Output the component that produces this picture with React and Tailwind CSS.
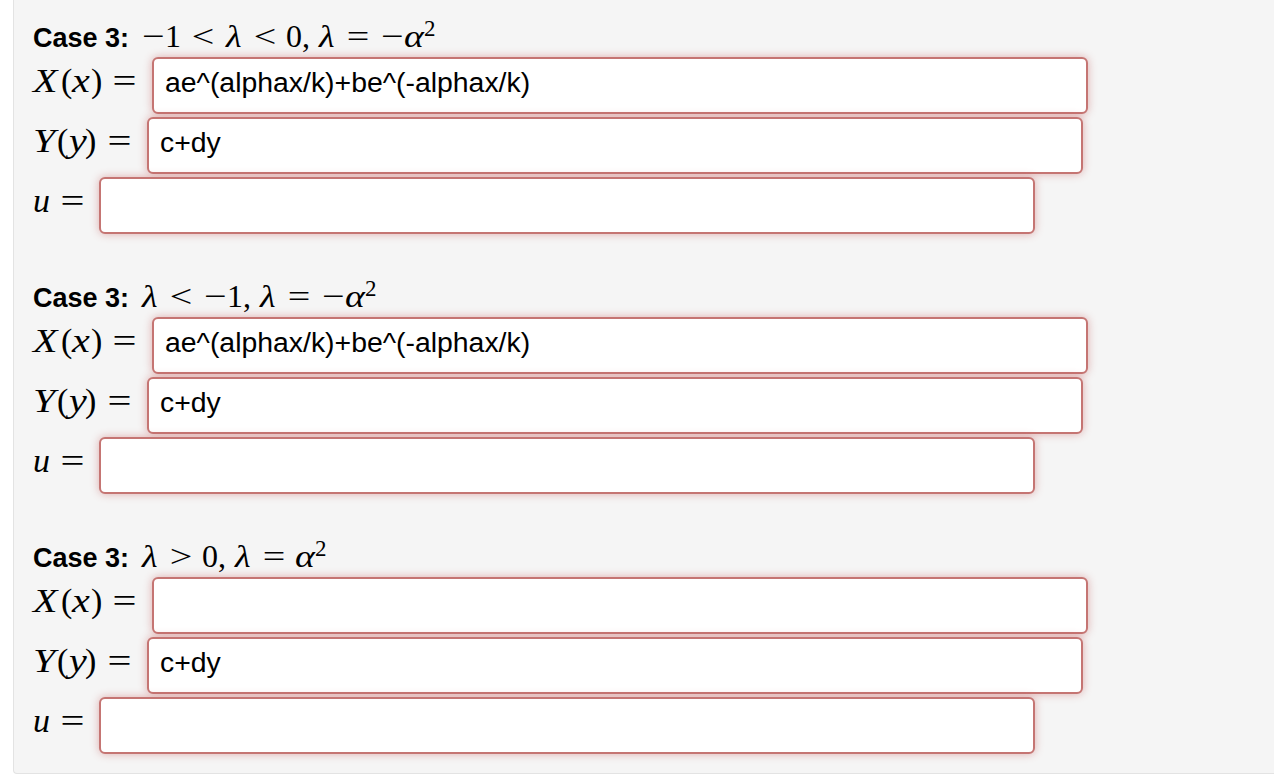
import React from "react";

const serif = "font-['Liberation_Serif','Times_New_Roman',serif]";
const sans = "font-['Liberation_Sans',Arial,sans-serif]";

/* relation / binary operator occupying a TeX-like 0.778em box */
function Rel({ children, spaced = true }) {
  return (
    <span className={`inline-block w-[25px] text-center not-italic ${spaced ? "mx-[9px]" : ""}`}>
      <span className="inline-block scale-x-[1.25]">{children}</span>
    </span>
  );
}

/* italic math letter, widened slightly towards TeX proportions */
function L({ w, children }) {
  return (
    <span className={`inline-block italic ${w}`}>
      <span className="inline-block origin-left scale-x-[1.18]">{children}</span>
    </span>
  );
}

function Heading({ children }) {
  return (
    <div className="flex h-[39px] items-baseline leading-[36px] text-black">
      <span className={`${sans} text-[27px] font-bold`}>Case 3:</span>
      <span className={`${serif} ml-[11px] text-[32px] whitespace-nowrap`}>{children}</span>
    </div>
  );
}

function Row({ label, labelW, value }) {
  return (
    <div className="flex h-[57px] items-baseline">
      <span
        className={`${serif} shrink-0 whitespace-nowrap text-[34px] leading-none text-black`}
        style={{ width: labelW }}
      >
        {label}
      </span>
      <input
        readOnly
        value={value}
        className={`${sans} h-[57px] w-[936px] shrink-0 rounded-[6px] border-2 border-[#c57573] bg-white px-[11px] pb-[7px] pt-0 text-[28.4px] text-black shadow-[0_0_9px_rgba(195,85,85,0.45)] outline-none`}
      />
    </div>
  );
}

const XLabel = (
  <>
    <L w="w-[28px]">X</L>
    <span className="inline-block w-[11px]">(</span>
    <L w="w-[19px]">x</L>
    <span className="inline-block w-[12px]">)</span>
    <Rel>=</Rel>
  </>
);
const YLabel = (
  <>
    <L w="w-[24px]">Y</L>
    <span className="inline-block w-[12px]">(</span>
    <L w="w-[16px]">y</L>
    <span className="inline-block w-[13px]">)</span>
    <Rel>=</Rel>
  </>
);
const ULabel = (
  <>
    <span className="inline-block w-[18px] italic">u</span>
    <Rel>=</Rel>
  </>
);

function Lam() {
  return (
    <span className="inline-block w-[19px] pl-[2px] italic">
      <span className="inline-block origin-left scale-x-[1.12]">λ</span>
    </span>
  );
}
function Alpha() {
  return <L w="w-[20px]">α</L>;
}
function Num({ children }) {
  return <span className="inline-block w-[16px]">{children}</span>;
}
function Comma() {
  return <span className="mr-[7px] inline-block w-[8px]">,</span>;
}
function Sq() {
  return <sup className="text-[23px]">2</sup>;
}

function Section({ heading, x, y, u, last }) {
  return (
    <div className={last ? "" : "mb-[44px]"}>
      <Heading>{heading}</Heading>
      <div className="flex flex-col gap-[3px]">
        <Row label={XLabel} labelW={119} value={x} />
        <Row label={YLabel} labelW={114} value={y} />
        <Row label={ULabel} labelW={66} value={u} />
      </div>
    </div>
  );
}

export default function App() {
  return (
    <div className="h-[782px] w-[1274px] overflow-hidden bg-white">
      <div className="ml-[13px] h-[774px] w-[1300px] rounded-bl-[4px] border-b border-l border-[#e3e3e3] bg-[#f5f5f5] pl-[19px] pt-[18px]">
        <Section
          heading={
            <>
              <Rel spaced={false}>−</Rel>
              <Num>1</Num>
              <Rel>&lt;</Rel>
              <Lam />
              <Rel>&lt;</Rel>
              <Num>0</Num>
              <Comma />
              <Lam />
              <Rel>=</Rel>
              <Rel spaced={false}>−</Rel>
              <Alpha />
              <Sq />
            </>
          }
          x="ae^(alphax/k)+be^(-alphax/k)"
          y="c+dy"
          u=""
        />
        <Section
          heading={
            <>
              <Lam />
              <Rel>&lt;</Rel>
              <Rel spaced={false}>−</Rel>
              <Num>1</Num>
              <Comma />
              <Lam />
              <Rel>=</Rel>
              <Rel spaced={false}>−</Rel>
              <Alpha />
              <Sq />
            </>
          }
          x="ae^(alphax/k)+be^(-alphax/k)"
          y="c+dy"
          u=""
        />
        <Section
          heading={
            <>
              <Lam />
              <Rel>&gt;</Rel>
              <Num>0</Num>
              <Comma />
              <Lam />
              <Rel>=</Rel>
              <Alpha />
              <Sq />
            </>
          }
          x=""
          y="c+dy"
          u=""
          last
        />
      </div>
    </div>
  );
}
